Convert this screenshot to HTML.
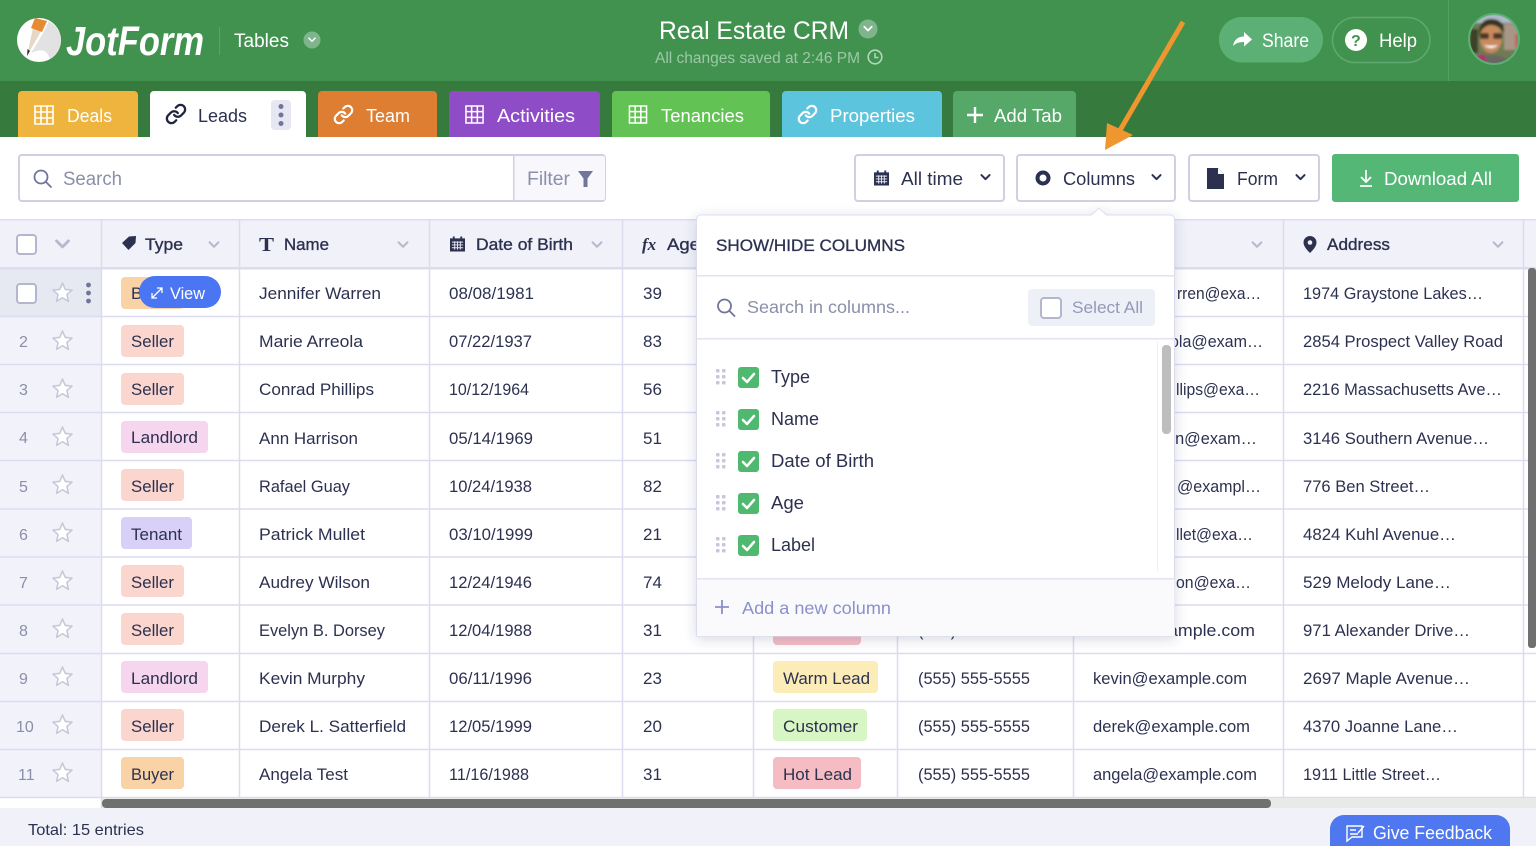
<!DOCTYPE html>
<html lang="en"><head><meta charset="utf-8"><title>Real Estate CRM - JotForm Tables</title>
<style>
html,body{margin:0;padding:0;background:#fff;overflow:hidden}
svg{display:block}
text{font-family:"Liberation Sans",sans-serif;font-size:17px;fill:#2c3150;white-space:pre}
.w{fill:#fff}.m{stroke:#2c3150;stroke-width:.35}.t{fill:#fff;font-size:18.5px}
.g{fill:#8b8fa8}.n{fill:#8c8ea8;font-size:16px}
.ln{stroke:#dcdcf0;stroke-width:1.5}
</style></head><body>
<svg width="1536" height="846" viewBox="0 0 1536 846" xmlns="http://www.w3.org/2000/svg">
<defs>
<symbol id="chev" viewBox="0 0 16 16"><path d="M3 5l5 5 5-5" fill="none" stroke="currentColor" stroke-width="2.4" stroke-linecap="round" stroke-linejoin="round"/></symbol>
<symbol id="star" viewBox="0 0 24 24"><path d="M12 2.2l2.9 6.6 7.1.7-5.4 4.7 1.6 7-6.2-3.7-6.2 3.7 1.6-7L2 9.500l7.100-.7z" fill="#fff" stroke="#c6c8d8" stroke-width="1.600" stroke-linejoin="round"/></symbol>
<symbol id="grid" viewBox="0 0 20 20"><path d="M1 1h18v18H1zM1 7h18M1 13h18M7 1v18M13 1v18" fill="none" stroke="#fff" stroke-width="1.600"/></symbol>
<symbol id="link" viewBox="0 0 24 24"><path d="M10 13a5 5 0 0 0 7.540.54l3-3a5 5 0 0 0-7.070-7.070l-1.720 1.710M14 11a5 5 0 0 0-7.540-.54l-3 3a5 5 0 0 0 7.070 7.070l1.710-1.710" fill="none" stroke="currentColor" stroke-width="2.500" stroke-linecap="round"/></symbol>
<symbol id="check" viewBox="0 0 21 21"><rect width="21" height="21" rx="3" fill="#4fb96f"/><path d="M5 11l4 4 7-8" fill="none" stroke="#fff" stroke-width="2.500" stroke-linecap="round" stroke-linejoin="round"/></symbol>
<symbol id="drag" viewBox="0 0 10 16"><g fill="#c5c7da"><rect x="0" y="0" width="3.500" height="3.500" rx="1"/><rect x="6" y="0" width="3.500" height="3.500" rx="1"/><rect x="0" y="6" width="3.500" height="3.500" rx="1"/><rect x="6" y="6" width="3.500" height="3.500" rx="1"/><rect x="0" y="12" width="3.500" height="3.500" rx="1"/><rect x="6" y="12" width="3.500" height="3.500" rx="1"/></g></symbol>
<symbol id="cal" viewBox="0 0 16 16"><path d="M0 2h16v14H0z" fill="#2c3150"/><path d="M3 0h2v3H3zM11 0h2v3h-2z" fill="#2c3150"/><path d="M2 6h12M2 9h12M2 12h12M5 5v9M8 5v9M11 5v9" stroke="#e8e9f4" stroke-width="1"/></symbol>
<filter id="sh" x="-10%" y="-10%" width="120%" height="120%"><feDropShadow dx="0" dy="3" stdDeviation="6" flood-color="#3a3f70" flood-opacity=".2"/></filter>
<filter id="bl"><feGaussianBlur stdDeviation="1"/></filter>
<clipPath id="av"><circle cx="1494" cy="39" r="24"/></clipPath>
<clipPath id="agec"><rect x="623" y="220" width="73" height="48"/></clipPath>
</defs>

<!-- top bar -->
<rect width="1536" height="82" fill="#42924f"/>
<rect y="81" width="1536" height="56" fill="#367a3e"/>
<circle cx="39" cy="40" r="22" fill="#fff"/>
<path d="M49 21C57 26 61 33 61 40 61 49 56 56 50 59 47 50 42 48 31 53 37 44 44 32 49 21Z" fill="#e2e2e2"/>
<path d="M35 18l12 3-19 33-1 1 1-4z" fill="#e7d8c6"/>
<path d="M35 18l12 3-5 11-11-4z" fill="#e88a32"/>
<path d="M27.500 49l2.500 2-3 5z" fill="#333"/>
<text x="66" y="55" textLength="138" lengthAdjust="spacingAndGlyphs" style="font-size:41px;font-weight:700;font-style:italic;fill:#fff">JotForm</text>
<rect x="219" y="27" width="1" height="28" fill="#5aa368"/>
<text x="234" y="47" textLength="55" lengthAdjust="spacingAndGlyphs" style="font-size:19px;fill:#fff">Tables</text>
<circle cx="312" cy="40" r="8.500" fill="#7eb58a"/><use href="#chev" x="307" y="35" width="10" height="10" style="color:#fff"/>
<text x="659" y="39" textLength="190" lengthAdjust="spacingAndGlyphs" style="font-size:25px;fill:#fff">Real Estate CRM</text>
<circle cx="868" cy="29" r="9.500" fill="#7eb58a"/><use href="#chev" x="862" y="23" width="12" height="12" style="color:#fff"/>
<text x="655" y="63" textLength="205" lengthAdjust="spacingAndGlyphs" style="font-size:15.500px;fill:#9cc8a6">All changes saved at 2:46 PM</text>
<circle cx="875" cy="57" r="6.800" fill="none" stroke="#b4d6bc" stroke-width="1.600"/><path d="M875 53v4.500h3.500" fill="none" stroke="#b4d6bc" stroke-width="1.500"/>
<rect x="1219" y="17" width="104" height="45.500" rx="22.700" fill="#5cb076"/>
<path d="M1233 46c1-6 5-9.500 11-9.500V32l8 7.500-8 7v-4.500c-5 0-8 1-11 4z" fill="#fff"/>
<text x="1262" y="47" textLength="47" lengthAdjust="spacingAndGlyphs" style="font-size:19px;fill:#fff">Share</text>
<rect x="1332.500" y="17.500" width="97.500" height="45" rx="22.500" fill="none" stroke="#5fa86f" stroke-width="1.500"/>
<circle cx="1356" cy="40" r="11" fill="#fff"/>
<text x="1351" y="46" style="font-size:16px;font-weight:700;fill:#42924f">?</text>
<text x="1379" y="47" textLength="38" lengthAdjust="spacingAndGlyphs" style="font-size:19px;fill:#fff">Help</text>
<rect x="1448" y="0" width="1" height="81" fill="#549e62"/>
<circle cx="1494" cy="39" r="26" fill="#5cb076"/>
<g clip-path="url(#av)"><g filter="url(#bl)">
<rect x="1468" y="14" width="52" height="52" fill="#6f7a52"/>
<rect x="1468" y="14" width="52" height="9" fill="#aeb8c8"/>
<rect x="1504" y="24" width="16" height="26" fill="#a89686"/>
<rect x="1515" y="34" width="5" height="14" fill="#c06a5a"/>
<rect x="1470" y="29" width="8" height="24" fill="#3c4228"/>
<path d="M1480 66c1-9 6-11 12-11s15 1 18 11v3h-30z" fill="#6a6664"/>
<path d="M1472 62c3-6 7-8 13-8l3 14h-16z" fill="#a8386a"/>
<ellipse cx="1491" cy="38" rx="11" ry="15" fill="#c98a5e"/>
<path d="M1479 36c-1-12 5-17 12-17 8 0 14 4 13 14-3-5-8-8-13-8-5 0-10 4-12 11z" fill="#35361f"/>
<rect x="1480" y="33" width="9" height="6" rx="2" fill="#4c3828"/><rect x="1493" y="33" width="9" height="6" rx="2" fill="#4c3828"/>
<path d="M1484 45q7 6 14 0-7 1.500-14 0z" fill="#fff"/>
</g></g>

<!-- tabs -->
<path d="M18 137V95a4 4 0 0 1 4-4h112a4 4 0 0 1 4 4v42z" fill="#eeb43e"/>
<use href="#grid" x="34" y="105" width="20" height="20"/>
<text class="t" x="67" y="122" textLength="45" lengthAdjust="spacingAndGlyphs">Deals</text>
<path d="M150 137V95a4 4 0 0 1 4-4h148a4 4 0 0 1 4 4v42z" fill="#fff"/>
<use href="#link" x="165" y="103" width="22" height="22" style="color:#20243f"/>
<text x="198" y="122" textLength="49" lengthAdjust="spacingAndGlyphs" style="font-size:18.500px">Leads</text>
<rect x="271" y="100" width="20" height="30" rx="4" fill="#e6e7f3"/>
<circle cx="281" cy="106.500" r="2.500" fill="#71759a"/><circle cx="281" cy="115" r="2.500" fill="#71759a"/><circle cx="281" cy="123.500" r="2.500" fill="#71759a"/>
<path d="M318 137V95a4 4 0 0 1 4-4h111a4 4 0 0 1 4 4v42z" fill="#de7e33"/>
<use href="#link" x="333" y="104" width="21" height="21" style="color:#fff"/>
<text class="t" x="366" y="122" textLength="44" lengthAdjust="spacingAndGlyphs">Team</text>
<path d="M449 137V95a4 4 0 0 1 4-4h143a4 4 0 0 1 4 4v42z" fill="#8f4cc7"/>
<use href="#grid" x="465" y="105" width="19" height="19"/>
<text class="t" x="497" y="122" textLength="78" lengthAdjust="spacingAndGlyphs">Activities</text>
<path d="M612 137V95a4 4 0 0 1 4-4h150a4 4 0 0 1 4 4v42z" fill="#62c254"/>
<use href="#grid" x="628" y="105" width="20" height="19"/>
<text class="t" x="661" y="122" textLength="83" lengthAdjust="spacingAndGlyphs">Tenancies</text>
<path d="M782 137V95a4 4 0 0 1 4-4h152a4 4 0 0 1 4 4v42z" fill="#5cc4dc"/>
<use href="#link" x="797" y="104" width="21" height="21" style="color:#fff"/>
<text class="t" x="830" y="122" textLength="85" lengthAdjust="spacingAndGlyphs">Properties</text>
<path d="M953 137V95a4 4 0 0 1 4-4h115a4 4 0 0 1 4 4v42z" fill="#56a868"/>
<path d="M975 107v16M967 115h16" stroke="#fff" stroke-width="2.400"/>
<text class="t" x="994" y="122" textLength="68" lengthAdjust="spacingAndGlyphs">Add Tab</text>

<!-- toolbar -->
<rect x="0" y="137" width="1536" height="83" fill="#fff"/>
<rect x="19" y="155" width="586" height="46" rx="3" fill="#fff" stroke="#cfd0e2" stroke-width="2"/>
<path d="M514 156h89a2 2 0 0 1 2 2v40a2 2 0 0 1-2 2h-89z" fill="#f8f8fc"/><rect x="513" y="155" width="1.500" height="46" fill="#cfd0e2"/>
<circle cx="41" cy="177" r="6.500" fill="none" stroke="#71759a" stroke-width="1.800"/><path d="M46 182l5 5" stroke="#71759a" stroke-width="1.800" stroke-linecap="round"/>
<text class="g" x="63" y="185" textLength="59" lengthAdjust="spacingAndGlyphs" style="font-size:19px">Search</text>
<text class="g" x="527" y="185" textLength="43" lengthAdjust="spacingAndGlyphs" style="font-size:19px">Filter</text>
<path d="M578 171h15l-5.500 7.500V187h-4v-8.500z" fill="#71759a"/>

<rect x="855" y="155" width="149" height="46" rx="3" fill="#fff" stroke="#cfd0e2" stroke-width="2"/>
<use href="#cal" x="874" y="170" width="15" height="16"/>
<text x="901" y="185" textLength="62" lengthAdjust="spacingAndGlyphs" style="font-size:18.500px">All time</text>
<use href="#chev" x="979" y="171" width="13" height="13" style="color:#2c3150"/>
<rect x="1017" y="155" width="158" height="46" rx="3" fill="#fff" stroke="#cfd0e2" stroke-width="2"/>
<circle cx="1043" cy="178" r="5.500" fill="none" stroke="#2c3150" stroke-width="4"/>
<text x="1063" y="185" textLength="72" lengthAdjust="spacingAndGlyphs" style="font-size:18.500px">Columns</text>
<use href="#chev" x="1150" y="171" width="13" height="13" style="color:#2c3150"/>
<rect x="1189" y="155" width="130" height="46" rx="3" fill="#fff" stroke="#cfd0e2" stroke-width="2"/>
<path d="M1207 168h11l6 6v15h-17z" fill="#2c3150"/><path d="M1218 168v6h6z" fill="#fff"/>
<text x="1237" y="185" textLength="41" lengthAdjust="spacingAndGlyphs" style="font-size:18.500px">Form</text>
<use href="#chev" x="1294" y="171" width="13" height="13" style="color:#2c3150"/>
<rect x="1332" y="154" width="187" height="48" rx="3" fill="#55b776"/>
<path d="M1366 170v11M1361 177l5 5 5-5M1360 186h12" fill="none" stroke="#fff" stroke-width="1.700"/>
<text x="1384" y="185" textLength="108" lengthAdjust="spacingAndGlyphs" style="font-size:18.500px;fill:#fff">Download All</text>

<!-- table -->
<rect x="0" y="219" width="1536" height="589" fill="#fff"/>
<rect x="0" y="220" width="1536" height="48" fill="#f0f1f9"/>
<rect x="0" y="268" width="101" height="529" fill="#f2f3fa"/>
<rect x="0" y="269" width="101" height="47" fill="#e6e8f2"/>
<rect x="0" y="219" width="1536" height="1.500" fill="#dcdcf0"/>
<rect x="0" y="267" width="1536" height="2.500" fill="#dcdcf0"/>
<path class="ln" d="M0 316.500H1536M0 364.500H1536M0 412.500H1536M0 460.500H1536M0 509H1536M0 557H1536M0 605H1536M0 653.500H1536M0 701.500H1536M0 749.500H1536M0 797.500H1536"/>
<path class="ln" d="M101.500 220V808M239.500 220V808M429.500 220V808M622.500 220V808M753.500 220V808M897.500 220V808M1073.500 220V808M1283.500 220V808M1523.500 220V808"/>

<rect x="17" y="235" width="19" height="19" rx="3" fill="#fff" stroke="#b4b6d0" stroke-width="2"/>
<use href="#chev" x="53" y="235" width="19" height="19" style="color:#b7b9cc"/>
<path d="M122 243l7-6.500 7-.5-.5 7-7 7z" fill="#2c3150"/>
<text class="m" x="145" y="250" textLength="38" lengthAdjust="spacingAndGlyphs">Type</text>
<use href="#chev" x="207" y="238" width="14" height="14" style="color:#b7b9cc"/>
<text x="259" y="251" textLength="15" lengthAdjust="spacingAndGlyphs" style="font-size:20px;font-weight:700;font-family:'Liberation Serif',serif">T</text>
<text class="m" x="284" y="250" textLength="45" lengthAdjust="spacingAndGlyphs">Name</text>
<use href="#chev" x="396" y="238" width="14" height="14" style="color:#b7b9cc"/>
<use href="#cal" x="450" y="236" width="15" height="16"/>
<text class="m" x="476" y="250" textLength="97" lengthAdjust="spacingAndGlyphs">Date of Birth</text>
<use href="#chev" x="590" y="238" width="14" height="14" style="color:#b7b9cc"/>
<text x="642" y="250" style="font-size:17px;font-style:italic;font-family:'Liberation Serif',serif;font-weight:700">fx</text>
<g clip-path="url(#agec)"><text class="m" x="667" y="250" textLength="33" lengthAdjust="spacingAndGlyphs">Age</text></g>
<use href="#chev" x="1250" y="238" width="14" height="14" style="color:#b7b9cc"/>
<path d="M1310 236a6.500 6.500 0 0 1 6.500 6.500c0 4-4 8-6.500 10.500-2.500-2.500-6.500-6.500-6.500-10.500a6.500 6.500 0 0 1 6.500-6.500z" fill="#2c3150"/><circle cx="1310" cy="242.500" r="2.300" fill="#f0f1f9"/>
<text class="m" x="1327" y="250" textLength="63" lengthAdjust="spacingAndGlyphs">Address</text>
<use href="#chev" x="1491" y="238" width="14" height="14" style="color:#b7b9cc"/>

<!-- row gutter -->
<rect x="17" y="284" width="19" height="19" rx="3" fill="#fff" stroke="#b4b6d0" stroke-width="2"/>
<circle cx="88.500" cy="285" r="2.400" fill="#71759a"/><circle cx="88.500" cy="293" r="2.400" fill="#71759a"/><circle cx="88.500" cy="301" r="2.400" fill="#71759a"/>
<text class="n" x="19" y="347">2</text><text class="n" x="19" y="395">3</text><text class="n" x="19" y="443">4</text><text class="n" x="19" y="492">5</text><text class="n" x="19" y="540">6</text><text class="n" x="19" y="588">7</text><text class="n" x="19" y="636">8</text><text class="n" x="19" y="684">9</text><text class="n" x="16" y="732">10</text><text class="n" x="18" y="780">11</text>
<use href="#star" x="51" y="281" width="23" height="23"/><use href="#star" x="51" y="329" width="23" height="23"/><use href="#star" x="51" y="377" width="23" height="23"/><use href="#star" x="51" y="425" width="23" height="23"/><use href="#star" x="51" y="473" width="23" height="23"/><use href="#star" x="51" y="521" width="23" height="23"/><use href="#star" x="51" y="569" width="23" height="23"/><use href="#star" x="51" y="617" width="23" height="23"/><use href="#star" x="51" y="665" width="23" height="23"/><use href="#star" x="51" y="713" width="23" height="23"/><use href="#star" x="51" y="761" width="23" height="23"/>

<!-- type chips -->
<rect x="121" y="277" width="63" height="32" rx="4" fill="#f9d2a6"/><text x="131" y="299">B</text>
<rect x="139" y="276" width="82" height="32" rx="16" fill="#4a76f4"/>
<path d="M152 298l10-10M152 293v5h5M157 288h5v5" fill="none" stroke="#fff" stroke-width="1.300"/>
<text x="170" y="299" textLength="35" lengthAdjust="spacingAndGlyphs" style="fill:#fff">View</text>
<rect x="121" y="325" width="63" height="32" rx="4" fill="#fad6cf"/><text x="131" y="347" textLength="43" lengthAdjust="spacingAndGlyphs">Seller</text>
<rect x="121" y="373" width="63" height="32" rx="4" fill="#fad6cf"/><text x="131" y="395" textLength="43" lengthAdjust="spacingAndGlyphs">Seller</text>
<rect x="121" y="421" width="87" height="32" rx="4" fill="#f6d6ee"/><text x="131" y="443" textLength="67" lengthAdjust="spacingAndGlyphs">Landlord</text>
<rect x="121" y="469" width="63" height="32" rx="4" fill="#fad6cf"/><text x="131" y="492" textLength="43" lengthAdjust="spacingAndGlyphs">Seller</text>
<rect x="121" y="517" width="71" height="32" rx="4" fill="#d8d0f6"/><text x="131" y="540" textLength="51" lengthAdjust="spacingAndGlyphs">Tenant</text>
<rect x="121" y="565" width="63" height="32" rx="4" fill="#fad6cf"/><text x="131" y="588" textLength="43" lengthAdjust="spacingAndGlyphs">Seller</text>
<rect x="121" y="613" width="63" height="32" rx="4" fill="#fad6cf"/><text x="131" y="636" textLength="43" lengthAdjust="spacingAndGlyphs">Seller</text>
<rect x="121" y="661" width="87" height="32" rx="4" fill="#f6d6ee"/><text x="131" y="684" textLength="67" lengthAdjust="spacingAndGlyphs">Landlord</text>
<rect x="121" y="709" width="63" height="32" rx="4" fill="#fad6cf"/><text x="131" y="732" textLength="43" lengthAdjust="spacingAndGlyphs">Seller</text>
<rect x="121" y="757" width="63" height="32" rx="4" fill="#f9d2a6"/><text x="131" y="780" textLength="43" lengthAdjust="spacingAndGlyphs">Buyer</text>

<!-- names -->
<text x="259" y="299" textLength="122" lengthAdjust="spacingAndGlyphs">Jennifer Warren</text>
<text x="259" y="347" textLength="104" lengthAdjust="spacingAndGlyphs">Marie Arreola</text>
<text x="259" y="395" textLength="115" lengthAdjust="spacingAndGlyphs">Conrad Phillips</text>
<text x="259" y="444" textLength="99" lengthAdjust="spacingAndGlyphs">Ann Harrison</text>
<text x="259" y="492" textLength="91" lengthAdjust="spacingAndGlyphs">Rafael Guay</text>
<text x="259" y="540" textLength="106" lengthAdjust="spacingAndGlyphs">Patrick Mullet</text>
<text x="259" y="588" textLength="111" lengthAdjust="spacingAndGlyphs">Audrey Wilson</text>
<text x="259" y="636" textLength="126" lengthAdjust="spacingAndGlyphs">Evelyn B. Dorsey</text>
<text x="259" y="684" textLength="106" lengthAdjust="spacingAndGlyphs">Kevin Murphy</text>
<text x="259" y="732" textLength="147" lengthAdjust="spacingAndGlyphs">Derek L. Satterfield</text>
<text x="259" y="780" textLength="89" lengthAdjust="spacingAndGlyphs">Angela Test</text>

<!-- dob -->
<text x="449" y="299" textLength="85" lengthAdjust="spacingAndGlyphs">08/08/1981</text>
<text x="449" y="347" textLength="83" lengthAdjust="spacingAndGlyphs">07/22/1937</text>
<text x="449" y="395" textLength="80" lengthAdjust="spacingAndGlyphs">10/12/1964</text>
<text x="449" y="444" textLength="84" lengthAdjust="spacingAndGlyphs">05/14/1969</text>
<text x="449" y="492" textLength="83" lengthAdjust="spacingAndGlyphs">10/24/1938</text>
<text x="449" y="540" textLength="84" lengthAdjust="spacingAndGlyphs">03/10/1999</text>
<text x="449" y="588" textLength="83" lengthAdjust="spacingAndGlyphs">12/24/1946</text>
<text x="449" y="636" textLength="83" lengthAdjust="spacingAndGlyphs">12/04/1988</text>
<text x="449" y="684" textLength="83" lengthAdjust="spacingAndGlyphs">06/11/1996</text>
<text x="449" y="732" textLength="83" lengthAdjust="spacingAndGlyphs">12/05/1999</text>
<text x="449" y="780" textLength="80" lengthAdjust="spacingAndGlyphs">11/16/1988</text>

<!-- age -->
<text x="643" y="299">39</text><text x="643" y="347">83</text><text x="643" y="395">56</text><text x="643" y="444">51</text><text x="643" y="492">82</text><text x="643" y="540">21</text><text x="643" y="588">74</text><text x="643" y="636">31</text><text x="643" y="684">23</text><text x="643" y="732">20</text><text x="643" y="780">31</text>

<!-- label / phone -->
<rect x="773" y="613" width="88" height="32" rx="4" fill="#f5bcc4"/>
<rect x="773" y="661" width="105" height="32" rx="4" fill="#fcecb8"/><text x="783" y="684" textLength="87" lengthAdjust="spacingAndGlyphs">Warm Lead</text>
<rect x="773" y="709" width="94" height="32" rx="4" fill="#d8f5c4"/><text x="783" y="732" textLength="75" lengthAdjust="spacingAndGlyphs">Customer</text>
<rect x="773" y="757" width="88" height="32" rx="4" fill="#f5bcc4"/><text x="783" y="780" textLength="69" lengthAdjust="spacingAndGlyphs">Hot Lead</text>
<text x="918" y="636" textLength="112" lengthAdjust="spacingAndGlyphs">(555) 555-5555</text>
<text x="918" y="684" textLength="112" lengthAdjust="spacingAndGlyphs">(555) 555-5555</text>
<text x="918" y="732" textLength="112" lengthAdjust="spacingAndGlyphs">(555) 555-5555</text>
<text x="918" y="780" textLength="112" lengthAdjust="spacingAndGlyphs">(555) 555-5555</text>

<!-- email -->
<text x="1177" y="299" textLength="84" lengthAdjust="spacingAndGlyphs">rren@exa…</text>
<text x="1170" y="347" textLength="93" lengthAdjust="spacingAndGlyphs">ola@exam…</text>
<text x="1176" y="395" textLength="84" lengthAdjust="spacingAndGlyphs">llips@exa…</text>
<text x="1166" y="444" textLength="91" lengthAdjust="spacingAndGlyphs">on@exam…</text>
<text x="1177" y="492" textLength="84" lengthAdjust="spacingAndGlyphs">@exampl…</text>
<text x="1176" y="540" textLength="77" lengthAdjust="spacingAndGlyphs">llet@exa…</text>
<text x="1176" y="588" textLength="75" lengthAdjust="spacingAndGlyphs">on@exa…</text>
<text x="1168" y="636" textLength="87" lengthAdjust="spacingAndGlyphs">ample.com</text>
<text x="1093" y="684" textLength="154" lengthAdjust="spacingAndGlyphs">kevin@example.com</text>
<text x="1093" y="732" textLength="157" lengthAdjust="spacingAndGlyphs">derek@example.com</text>
<text x="1093" y="780" textLength="164" lengthAdjust="spacingAndGlyphs">angela@example.com</text>

<!-- address -->
<text x="1303" y="299" textLength="180" lengthAdjust="spacingAndGlyphs">1974 Graystone Lakes…</text>
<text x="1303" y="347" textLength="200" lengthAdjust="spacingAndGlyphs">2854 Prospect Valley Road</text>
<text x="1303" y="395" textLength="199" lengthAdjust="spacingAndGlyphs">2216 Massachusetts Ave…</text>
<text x="1303" y="444" textLength="186" lengthAdjust="spacingAndGlyphs">3146 Southern Avenue…</text>
<text x="1303" y="492" textLength="127" lengthAdjust="spacingAndGlyphs">776 Ben Street…</text>
<text x="1303" y="540" textLength="153" lengthAdjust="spacingAndGlyphs">4824 Kuhl Avenue…</text>
<text x="1303" y="588" textLength="148" lengthAdjust="spacingAndGlyphs">529 Melody Lane…</text>
<text x="1303" y="636" textLength="167" lengthAdjust="spacingAndGlyphs">971 Alexander Drive…</text>
<text x="1303" y="684" textLength="167" lengthAdjust="spacingAndGlyphs">2697 Maple Avenue…</text>
<text x="1303" y="732" textLength="155" lengthAdjust="spacingAndGlyphs">4370 Joanne Lane…</text>
<text x="1303" y="780" textLength="138" lengthAdjust="spacingAndGlyphs">1911 Little Street…</text>

<!-- scrollbars -->
<rect x="102" y="798" width="1434" height="10" fill="#e9e9e9"/>
<rect x="102" y="799" width="1169" height="9" rx="4" fill="#707070"/>
<rect x="1528" y="268" width="8" height="380" rx="3" fill="#707070"/>

<!-- footer -->
<rect x="0" y="808" width="1536" height="38" fill="#f0f1f9"/>
<text x="28" y="835" textLength="116" lengthAdjust="spacingAndGlyphs" style="font-size:16px">Total: 15 entries</text>
<path d="M1330 846V829a14 14 0 0 1 14-14h152a14 14 0 0 1 14 14v17z" fill="#4f77f0"/>
<path d="M1347 826h15v11h-10l-5 4z" fill="none" stroke="#fff" stroke-width="1.400"/><path d="M1350 830h6M1350 834h8M1358 833l6-7" stroke="#fff" stroke-width="1.400" fill="none"/>
<text x="1373" y="839" textLength="119" lengthAdjust="spacingAndGlyphs" style="font-size:18.500px;fill:#fff">Give Feedback</text>

<!-- popup -->
<g filter="url(#sh)">
<path d="M696.500 219a4 4 0 0 1 4-4h391l7.500-7 7.500 7h64a4 4 0 0 1 4 4v417h-478z" fill="#fff" stroke="#dcdcf0"/>
</g>
<text x="716" y="251" textLength="189" lengthAdjust="spacingAndGlyphs" style="font-size:16.500px;stroke:#2c3150;stroke-width:.3">SHOW/HIDE COLUMNS</text>
<rect x="697" y="275" width="477.500" height="1.500" fill="#e2e2f2"/>
<circle cx="724.500" cy="306" r="6.500" fill="none" stroke="#71759a" stroke-width="1.800"/><path d="M729.500 311l5 5" stroke="#71759a" stroke-width="1.800" stroke-linecap="round"/>
<text class="g" x="747" y="313" textLength="163" lengthAdjust="spacingAndGlyphs" style="font-size:17.500px">Search in columns...</text>
<rect x="1028" y="289" width="127" height="37" rx="4" fill="#eef0f8"/>
<rect x="1041" y="298" width="20" height="20" rx="3" fill="#fff" stroke="#b4b6d0" stroke-width="2"/>
<text x="1072" y="313" textLength="71" lengthAdjust="spacingAndGlyphs" style="font-size:17px;fill:#9598b8">Select All</text>
<rect x="697" y="338" width="477.500" height="1.500" fill="#e2e2f2"/>
<use href="#drag" x="716" y="369" width="10" height="16"/><use href="#check" x="738" y="367"  width="21" height="21"/><text x="771" y="383" textLength="39" lengthAdjust="spacingAndGlyphs" style="font-size:18px">Type</text>
<use href="#drag" x="716" y="411" width="10" height="16"/><use href="#check" x="738" y="409" width="21" height="21"/><text x="771" y="425" textLength="48" lengthAdjust="spacingAndGlyphs" style="font-size:18px">Name</text>
<use href="#drag" x="716" y="453" width="10" height="16"/><use href="#check" x="738" y="451" width="21" height="21"/><text x="771" y="467" textLength="103" lengthAdjust="spacingAndGlyphs" style="font-size:18px">Date of Birth</text>
<use href="#drag" x="716" y="495" width="10" height="16"/><use href="#check" x="738" y="493" width="21" height="21"/><text x="771" y="509" textLength="33" lengthAdjust="spacingAndGlyphs" style="font-size:18px">Age</text>
<use href="#drag" x="716" y="537" width="10" height="16"/><use href="#check" x="738" y="535" width="21" height="21"/><text x="771" y="551" textLength="44" lengthAdjust="spacingAndGlyphs" style="font-size:18px">Label</text>
<rect x="1157" y="342" width="1" height="230" fill="#efeff5"/>
<rect x="1162" y="345" width="9" height="89" rx="4" fill="#bdbdbd"/>
<rect x="697" y="578" width="477.500" height="58" fill="#fafafd"/>
<rect x="697" y="578" width="477.500" height="1.500" fill="#e2e2f2"/>
<path d="M722 600v14M715 607h14" stroke="#8a90c8" stroke-width="1.800"/>
<text x="742" y="614" textLength="149" lengthAdjust="spacingAndGlyphs" style="font-size:17.500px;fill:#8a90c8">Add a new column</text>

<!-- arrow -->
<path d="M1183 22L1119 132" stroke="#f0962e" stroke-width="5" fill="none"/>
<path d="M1105 150l2-27 26 12z" fill="#f0962e"/>
</svg>
</body></html>
